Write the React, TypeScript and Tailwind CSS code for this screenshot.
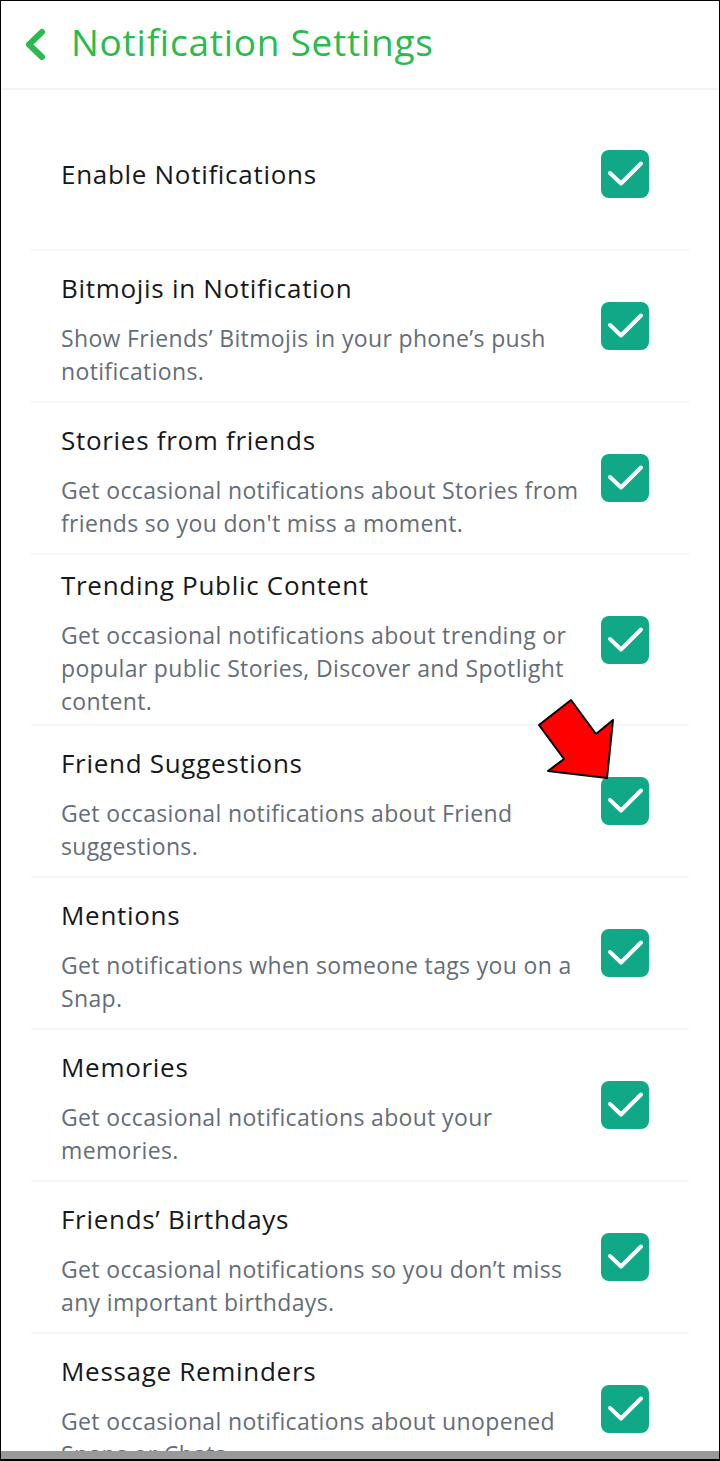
import React from 'react';

interface Setting {
  title: string;
  lines: string[];
}

const settings: Setting[] = [
  { title: 'Bitmojis in Notification', lines: ['Show Friends’ Bitmojis in your phone’s push', 'notifications.'] },
  { title: 'Stories from friends', lines: ['Get occasional notifications about Stories from', "friends so you don't miss a moment."] },
  {
    title: 'Trending Public Content',
    lines: ['Get occasional notifications about trending or', 'popular public Stories, Discover and Spotlight', 'content.'],
  },
  { title: 'Friend Suggestions', lines: ['Get occasional notifications about Friend', 'suggestions.'] },
  { title: 'Mentions', lines: ['Get notifications when someone tags you on a', 'Snap.'] },
  { title: 'Memories', lines: ['Get occasional notifications about your', 'memories.'] },
  { title: 'Friends’ Birthdays', lines: ['Get occasional notifications so you don’t miss', 'any important birthdays.'] },
  { title: 'Message Reminders', lines: ['Get occasional notifications about unopened', 'Snaps or Chats.'] },
];

const Checkbox = () => (
  <div className="w-[48px] h-[48px] shrink-0 rounded-[8px] bg-[#10a887] flex items-center justify-center">
    <svg width="48" height="48" viewBox="0 0 48 48" fill="none">
      <path d="M9 23 L20 33.5 L40 13.5" stroke="white" strokeWidth="4" strokeLinecap="round" strokeLinejoin="round" />
    </svg>
  </div>
);

const Row = ({ setting }: { setting: Setting }) => (
  <div className="mx-[30px] border-t-2 border-[#f5f5f5] min-h-[152px] pt-[12px] pb-[6px] flex items-center">
    <div className="flex-1 pl-[30px]">
      <div className="text-[26px] leading-[36px] tracking-[0.7px] text-[#16191c]">{setting.title}</div>
      <div className="mt-[16px] text-[23px] leading-[33px] tracking-[0.35px] text-[#656d78] whitespace-nowrap">
        {setting.lines.map((l, i) => (
          <React.Fragment key={i}>
            {l}
            {i < setting.lines.length - 1 ? <br /> : null}
          </React.Fragment>
        ))}
      </div>
    </div>
    <div className="mr-[40px] -mt-[6px]">
      <Checkbox />
    </div>
  </div>
);

export default function App() {
  return (
    <div
      className="relative w-[720px] h-[1461px] bg-white overflow-hidden flex flex-col border-x border-t border-black"
      style={{ fontFamily: '"Open Sans", "Noto Sans", sans-serif' }}
    >
      <div className="h-[89px] shrink-0 flex items-center border-b-2 border-[#f3f3f3]">
        <svg className="ml-[22px]" width="26" height="36" viewBox="0 0 26 36" fill="none">
          <path d="M19 5 L6 17.5 L19 30" stroke="#2abb4e" strokeWidth="6" strokeLinecap="round" strokeLinejoin="round" />
        </svg>
        <div className="ml-[22px] text-[37px] leading-none tracking-[0.75px] text-[#2abb4e] -mt-[6px]">
          Notification Settings
        </div>
      </div>

      <div className="flex-1 overflow-hidden">
        <div className="mx-[30px] h-[159px] pt-[8px] flex items-center">
          <div className="flex-1 pl-[30px] text-[26px] leading-[36px] tracking-[0.7px] text-[#16191c]">
            Enable Notifications
          </div>
          <div className="mr-[40px]">
            <Checkbox />
          </div>
        </div>
        {settings.map(s => (
          <Row key={s.title} setting={s} />
        ))}
      </div>

      <div className="h-[8px] shrink-0 bg-[#999999]" />
      <div className="h-[2px] shrink-0 bg-black" />

      <svg className="absolute left-0 top-0 pointer-events-none" width="720" height="1461" viewBox="-1 0 720 1461">
        <polygon
          points="569,699 537,724 562,758 546,770 605,777 611,719 594,733"
          fill="#ff0000"
          stroke="black"
          strokeWidth="2"
          strokeLinejoin="round"
        />
      </svg>
    </div>
  );
}
